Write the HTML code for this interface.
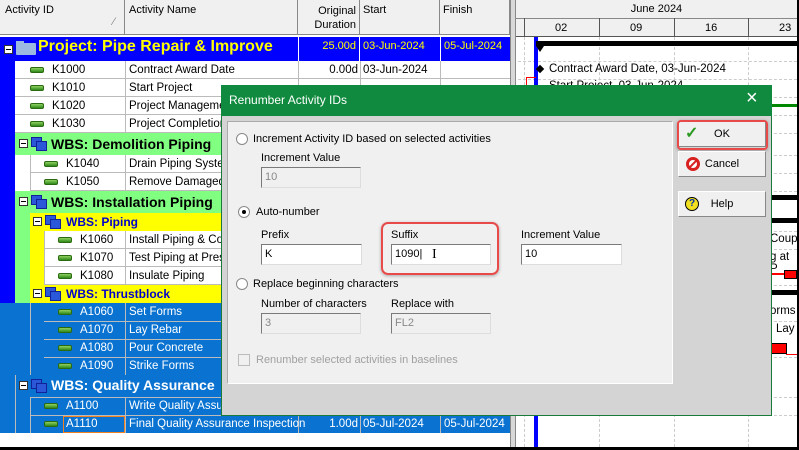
<!DOCTYPE html>
<html><head><meta charset="utf-8"><style>
*{box-sizing:border-box;margin:0;padding:0}
body{width:799px;height:450px;overflow:hidden;background:#000;font-family:"Liberation Sans",Arial,sans-serif;font-size:11px;color:#000;position:relative}
.a{position:absolute}
.t{position:absolute;font-size:11.5px}
.hdr{background:#f0f0f0;border-right:1px solid #888;border-bottom:1px solid #888;height:35px}
.row{position:absolute;left:0;width:508px}
.bar{position:absolute;width:14px;height:6px;background:linear-gradient(#8fd060,#2f8a1a);border-radius:2px;border:1px solid #2a6a10}
.mn{position:absolute;width:9px;height:9px;border:1px solid #333;background:#fff}
.mn:after{content:"";position:absolute;left:1px;top:3px;width:5px;height:1px;background:#000}
.wb{position:absolute;width:14px;height:13px}
.wb:before{content:"";position:absolute;left:0;top:0;width:9px;height:8px;background:#2a58d8;border:1px solid #112299}
.wb:after{content:"";position:absolute;left:5px;top:4px;width:9px;height:8px;background:#2a58d8;border:1px solid #112299}
.inp{position:absolute;height:21px;background:#fff;border:1px solid #7a7a7a;border-right-color:#ddd;border-bottom-color:#ddd;padding:3px 3px;font-size:11px}
.dis{background:#f0f0f0;color:#888}
.rad{position:absolute;width:12px;height:12px;border-radius:50%;border:1px solid #888;background:#fff}
.btn{position:absolute;left:678px;width:88px;height:26px;background:#f0f0f0;border:1px solid #fff;border-right-color:#888;border-bottom-color:#888;text-align:center;line-height:24px;font-size:11px}
.vl{position:absolute;top:37px;bottom:0;border-left:1px dashed #ccc}
.hl{position:absolute;left:518px;width:279px;border-top:1px dashed #ccc}
</style></head><body>
<div class="a" style="left:0;top:0;width:797px;height:447px;background:#fff;overflow:hidden">
<div class="a hdr" style="left:0;top:0;width:125px;padding:4px 5px">Activity ID<span class="a" style="left:113px;top:16px;color:#888">⁄</span></div>
<div class="a hdr" style="left:125px;top:0;width:173px;padding:4px 4px">Activity Name</div>
<div class="a hdr" style="left:298px;top:0;width:62px;padding:4px 3px;text-align:right;line-height:14px">Original<br>Duration</div>
<div class="a hdr" style="left:360px;top:0;width:80px;padding:4px 3px">Start</div>
<div class="a hdr" style="left:440px;top:0;width:70px;padding:4px 3px">Finish</div>
<div class="a" style="left:510px;top:0;width:6px;height:447px;background:#d8d8d8;border-left:1px solid #888;border-right:1px solid #888"></div>
<div class="a" style="left:516px;top:0;width:281px;height:37px;background:#f0f0f0;border-bottom:1px solid #555"></div>
<div class="a" style="left:516px;top:3px;width:281px;text-align:center">June 2024</div>
<div class="a" style="left:516px;top:18px;width:281px;border-top:1px solid #888"></div>
<div class="a" style="left:524px;top:18px;height:19px;border-left:1px solid #555"></div>
<div class="a" style="left:599px;top:18px;height:19px;border-left:1px solid #555"></div>
<div class="a" style="left:674px;top:18px;height:19px;border-left:1px solid #555"></div>
<div class="a" style="left:748px;top:18px;height:19px;border-left:1px solid #555"></div>
<div class="a" style="left:555px;top:22px">02</div><div class="a" style="left:630px;top:22px">09</div><div class="a" style="left:705px;top:22px">16</div><div class="a" style="left:779px;top:22px">23</div>
<div class="vl" style="left:524px"></div><div class="vl" style="left:599px"></div><div class="vl" style="left:674px"></div><div class="vl" style="left:748px"></div>
<div class="hl" style="top:61px"></div><div class="hl" style="top:79px"></div><div class="hl" style="top:97px"></div><div class="hl" style="top:115px"></div><div class="hl" style="top:133px"></div><div class="hl" style="top:155px"></div><div class="hl" style="top:173px"></div><div class="hl" style="top:191px"></div><div class="hl" style="top:231px"></div><div class="hl" style="top:249px"></div><div class="hl" style="top:285px"></div><div class="hl" style="top:321px"></div><div class="hl" style="top:357px"></div><div class="hl" style="top:397px"></div><div class="hl" style="top:415px"></div>
<div class="a" style="left:534px;top:37px;width:4px;height:410px;background:#0000ff"></div>
<div class="a" style="left:536px;top:41px;width:261px;height:5px;background:#000"></div>
<div class="a" style="left:536px;top:46px;border:4px solid transparent;border-top:6px solid #000"></div>
<div class="a" style="left:537px;top:66px;width:6px;height:6px;background:#000;transform:rotate(45deg)"></div>
<div class="t" style="left:549px;top:63px">Contract Award Date, 03-Jun-2024</div>
<div class="a" style="left:526px;top:77px;width:10px;height:10px;border:1px solid red;border-right:none;border-bottom:none"></div>
<div class="t" style="left:549px;top:80px">Start Project, 03-Jun-2024</div>
<div class="a" style="left:770px;top:104px;width:27px;height:3px;background:#080"></div>
<div class="a" style="left:770px;top:195px;width:27px;height:5px;background:#000"></div>
<div class="a" style="left:770px;top:218px;width:27px;height:5px;background:#000"></div>
<div class="a" style="left:770px;top:290px;width:27px;height:5px;background:#000"></div>
<div class="t" style="left:770px;top:233px">Coupl</div>
<div class="t" style="left:770px;top:251px">g at P</div>
<div class="a" style="left:770px;top:273px;width:14px;height:2px;background:red"></div>
<div class="a" style="left:784px;top:270px;width:13px;height:9px;background:red;border:1px solid #000"></div>
<div class="t" style="left:770px;top:305px">orms</div>
<div class="t" style="left:776px;top:323px">Lay</div>
<div class="a" style="left:770px;top:343px;width:17px;height:11px;background:red;border:1px solid #000"></div>
<div class="a" style="left:786px;top:354px;width:11px;height:1px;background:red"></div>

<div class="a" style="left:0;top:37px;width:15px;height:266px;background:#0000ff"></div>
<div class="a" style="left:15px;top:133px;width:15px;height:170px;background:#80ff80"></div>
<div class="a" style="left:0;top:303px;width:510px;height:130px;background:#0a73d1"></div>

<div class="row" style="top:37px;height:24px;background:#0000ff;left:0;width:510px">
 <div class="mn" style="left:4px;top:8px"></div>
 <div class="a" style="left:16px;top:6px;width:20px;height:12px;background:#9ab8e0;border-radius:1px"></div>
 <div class="a" style="left:16px;top:4px;width:8px;height:3px;background:#9ab8e0"></div>
 <div class="a" style="left:38px;top:1px;color:#ff0;font-weight:bold;font-size:16px">Project: Pipe Repair &amp; Improve</div>
 <div class="a" style="left:298px;top:0;width:62px;height:24px;border-left:1px solid #fff;border-right:1px solid #fff;color:#ff0;text-align:right;padding:3px 3px">25.00d</div>
 <div class="a" style="left:363px;top:3px;color:#ff0">03-Jun-2024</div>
 <div class="a" style="left:440px;top:0;height:24px;border-left:1px solid #fff;color:#ff0;padding:3px 3px">05-Jul-2024</div>
</div>

<div class="a" style="left:15px;top:61px;width:495px;height:72px;background:#fff"></div>
<div class="a" style="left:15px;top:155px;width:495px;height:36px;background:#fff"></div>
<div class="a" style="left:44px;top:231px;width:466px;height:54px;background:#fff"></div>
<div class="a" style="left:15px;top:133px;width:495px;height:22px;background:#80ff80"></div>
<div class="a" style="left:15px;top:191px;width:495px;height:22px;background:#80ff80"></div>
<div class="a" style="left:30px;top:213px;width:480px;height:18px;background:#ff0"></div>
<div class="a" style="left:30px;top:231px;width:14px;height:72px;background:#ff0"></div>
<div class="a" style="left:30px;top:285px;width:480px;height:18px;background:#ff0"></div>

<div class="mn" style="left:19px;top:139px"></div><div class="wb" style="left:31px;top:137px"></div><div class="a" style="left:51px;top:136px;font-weight:bold;font-size:14px">WBS: Demolition Piping</div>
<div class="mn" style="left:19px;top:197px"></div><div class="wb" style="left:31px;top:195px"></div><div class="a" style="left:51px;top:194px;font-weight:bold;font-size:14px">WBS: Installation Piping</div>
<div class="mn" style="left:33px;top:217px"></div><div class="wb" style="left:45px;top:215px"></div><div class="a" style="left:66px;top:215px;font-weight:bold;font-size:12px;color:#00c">WBS: Piping</div>
<div class="mn" style="left:33px;top:289px"></div><div class="wb" style="left:45px;top:287px"></div><div class="a" style="left:66px;top:287px;font-weight:bold;font-size:12px;color:#00c">WBS: Thrustblock</div>
<div class="mn" style="left:19px;top:381px"></div><div class="wb" style="left:31px;top:379px"></div><div class="a" style="left:51px;top:377px;font-weight:bold;font-size:14px;color:#fff">WBS: Quality Assurance</div>

<div class="a" style="left:15px;top:61px;width:495px;height:18px;border-bottom:1px solid #bbb"></div>
<div class="a" style="left:15px;top:79px;width:495px;height:18px;border-bottom:1px solid #bbb"></div>
<div class="a" style="left:15px;top:97px;width:495px;height:18px;border-bottom:1px solid #bbb"></div>
<div class="a" style="left:15px;top:115px;width:495px;height:18px;border-bottom:1px solid #bbb"></div>
<div class="a" style="left:30px;top:155px;width:480px;height:18px;border-bottom:1px solid #bbb;border-left:1px solid #bbb"></div>
<div class="a" style="left:30px;top:173px;width:480px;height:18px;border-bottom:1px solid #bbb;border-left:1px solid #bbb"></div>
<div class="a" style="left:44px;top:231px;width:466px;height:18px;border-bottom:1px solid #bbb;border-left:1px solid #bbb"></div>
<div class="a" style="left:44px;top:249px;width:466px;height:18px;border-bottom:1px solid #bbb;border-left:1px solid #bbb"></div>
<div class="a" style="left:44px;top:267px;width:466px;height:18px;border-bottom:1px solid #bbb;border-left:1px solid #bbb"></div>
<div class="a" style="left:30px;top:303px;width:480px;height:72px;border-left:1px solid #bbb"></div>
<div class="a" style="left:44px;top:321px;width:466px;height:1px;background:#bbb"></div>
<div class="a" style="left:44px;top:339px;width:466px;height:1px;background:#bbb"></div>
<div class="a" style="left:44px;top:357px;width:466px;height:1px;background:#bbb"></div>
<div class="a" style="left:30px;top:397px;width:480px;height:36px;border-left:1px solid #bbb;border-top:1px solid #bbb"></div>
<div class="a" style="left:30px;top:415px;width:480px;height:1px;background:#bbb"></div>
<div class="a" style="left:15px;top:375px;width:15px;height:58px;border-left:1px solid #bbb"></div>
<div class="a" style="left:125px;top:61px;height:72px;border-left:1px solid #bbb"></div>
<div class="a" style="left:125px;top:155px;height:36px;border-left:1px solid #bbb"></div>
<div class="a" style="left:125px;top:231px;height:54px;border-left:1px solid #bbb"></div>
<div class="a" style="left:125px;top:303px;height:72px;border-left:1px solid #bbb"></div>
<div class="a" style="left:125px;top:397px;height:36px;border-left:1px solid #bbb"></div>
<div class="a" style="left:298px;top:61px;height:372px;border-left:1px solid #bbb"></div>
<div class="a" style="left:360px;top:61px;height:372px;border-left:1px solid #bbb"></div>
<div class="a" style="left:440px;top:61px;height:372px;border-left:1px solid #bbb"></div>

<div class="bar" style="left:30px;top:67px"></div><div class="t" style="left:52px;top:64px">K1000</div><div class="t" style="left:129px;top:64px">Contract Award Date</div><div class="t" style="left:300px;top:64px;width:58px;text-align:right">0.00d</div><div class="t" style="left:363px;top:64px">03-Jun-2024</div>
<div class="bar" style="left:30px;top:85px"></div><div class="t" style="left:52px;top:82px">K1010</div><div class="t" style="left:129px;top:82px">Start Project</div>
<div class="bar" style="left:30px;top:103px"></div><div class="t" style="left:52px;top:100px">K1020</div><div class="t" style="left:129px;top:100px">Project Management</div>
<div class="bar" style="left:30px;top:121px"></div><div class="t" style="left:52px;top:118px">K1030</div><div class="t" style="left:129px;top:118px">Project Completion</div>
<div class="bar" style="left:44px;top:161px"></div><div class="t" style="left:66px;top:158px">K1040</div><div class="t" style="left:129px;top:158px">Drain Piping System</div>
<div class="bar" style="left:44px;top:179px"></div><div class="t" style="left:66px;top:176px">K1050</div><div class="t" style="left:129px;top:176px">Remove Damaged</div>
<div class="bar" style="left:58px;top:237px"></div><div class="t" style="left:80px;top:234px">K1060</div><div class="t" style="left:129px;top:234px">Install Piping &amp; Coupling</div>
<div class="bar" style="left:58px;top:255px"></div><div class="t" style="left:80px;top:252px">K1070</div><div class="t" style="left:129px;top:252px">Test Piping at Pressure</div>
<div class="bar" style="left:58px;top:273px"></div><div class="t" style="left:80px;top:270px">K1080</div><div class="t" style="left:129px;top:270px">Insulate Piping</div>
<div class="bar" style="left:58px;top:309px"></div><div class="t" style="left:80px;top:306px;color:#fff">A1060</div><div class="t" style="left:129px;top:306px;color:#fff">Set Forms</div>
<div class="bar" style="left:58px;top:327px"></div><div class="t" style="left:80px;top:324px;color:#fff">A1070</div><div class="t" style="left:129px;top:324px;color:#fff">Lay Rebar</div>
<div class="bar" style="left:58px;top:345px"></div><div class="t" style="left:80px;top:342px;color:#fff">A1080</div><div class="t" style="left:129px;top:342px;color:#fff">Pour Concrete</div>
<div class="bar" style="left:58px;top:363px"></div><div class="t" style="left:80px;top:360px;color:#fff">A1090</div><div class="t" style="left:129px;top:360px;color:#fff">Strike Forms</div>
<div class="bar" style="left:44px;top:403px"></div><div class="t" style="left:66px;top:400px;color:#fff">A1100</div><div class="t" style="left:129px;top:400px;color:#fff">Write Quality Assurance</div>
<div class="bar" style="left:44px;top:421px"></div><div class="a" style="left:63px;top:416px;width:62px;height:17px;border:1px solid #f08020"></div><div class="t" style="left:66px;top:418px;color:#fff">A1110</div><div class="t" style="left:129px;top:418px;color:#fff">Final Quality Assurance Inspection</div><div class="t" style="left:300px;top:418px;width:58px;text-align:right;color:#fff">1.00d</div><div class="t" style="left:363px;top:418px;color:#fff">05-Jul-2024</div><div class="t" style="left:444px;top:418px;color:#fff">05-Jul-2024</div>

<div class="a" style="left:221px;top:85px;width:551px;height:331px;background:#d4d4d4;border:1px solid #1a7a3a"></div>
<div class="a" style="left:221px;top:85px;width:551px;height:31px;background:#108a3e"></div>
<div class="a" style="left:229px;top:93px;color:#fff;font-size:12px">Renumber Activity IDs</div>
<div class="a" style="left:746px;top:87px;color:#fff;font-size:20px">×</div>
<div class="a" style="left:227px;top:121px;width:446px;height:263px;background:#f0f0f0;border:1px solid #aaa;border-right-color:#fff;border-bottom-color:#fff"></div>
<div class="rad" style="left:236px;top:133px"></div>
<div class="a" style="left:253px;top:133px">Increment Activity ID based on selected activities</div>
<div class="a" style="left:261px;top:152px">Increment Value</div>
<div class="inp dis" style="left:261px;top:167px;width:100px">10</div>
<div class="rad" style="left:238px;top:206px"></div><div class="a" style="left:242px;top:210px;width:4px;height:4px;border-radius:50%;background:#000"></div>
<div class="a" style="left:256px;top:206px">Auto-number</div>
<div class="a" style="left:261px;top:229px">Prefix</div>
<div class="inp" style="left:261px;top:244px;width:101px">K</div>
<div class="a" style="left:381px;top:222px;width:118px;height:53px;border:2px solid #e84a4a;border-radius:7px;box-shadow:0 1px 3px rgba(0,0,0,.3)"></div>
<div class="a" style="left:391px;top:229px">Suffix</div>
<div class="inp" style="left:391px;top:244px;width:100px">1090|</div>
<div class="a" style="left:432px;top:247px;font-size:14px;font-family:'Liberation Serif',serif">I</div>
<div class="a" style="left:521px;top:229px">Increment Value</div>
<div class="inp" style="left:521px;top:244px;width:101px">10</div>
<div class="rad" style="left:236px;top:278px"></div>
<div class="a" style="left:253px;top:278px">Replace beginning characters</div>
<div class="a" style="left:261px;top:298px">Number of characters</div>
<div class="inp dis" style="left:261px;top:313px;width:100px">3</div>
<div class="a" style="left:391px;top:298px">Replace with</div>
<div class="inp dis" style="left:391px;top:313px;width:100px">FL2</div>
<div class="a" style="left:238px;top:354px;width:12px;height:12px;border:1px solid #bbb;background:#f0f0f0"></div>
<div class="a" style="left:256px;top:354px;color:#a0a0a0">Renumber selected activities in baselines</div>

<div class="btn" style="top:121px"><span class="a" style="left:6px;top:0;color:#2a9a20;font-size:16px;font-weight:bold">✓</span>OK</div>
<div class="a" style="left:677px;top:120px;width:91px;height:30px;border:2px solid #e84a4a;border-radius:4px;box-shadow:0 1px 3px rgba(0,0,0,.3)"></div>
<div class="btn" style="top:151px"><span class="a" style="left:7px;top:5px;width:14px;height:14px;border-radius:50%;border:3px solid #d82020;background:#fff"></span><span class="a" style="left:9px;top:11px;width:10px;height:2px;background:#d82020;transform:rotate(-45deg)"></span>Cancel</div>
<div class="btn" style="top:191px"><span class="a" style="left:6px;top:5px;width:14px;height:14px;border-radius:50%;border:1px solid #000;background:#f0e020;font-size:10px;line-height:12px;color:#0033aa;font-weight:bold">?</span>Help</div>
</div>
</body></html>
